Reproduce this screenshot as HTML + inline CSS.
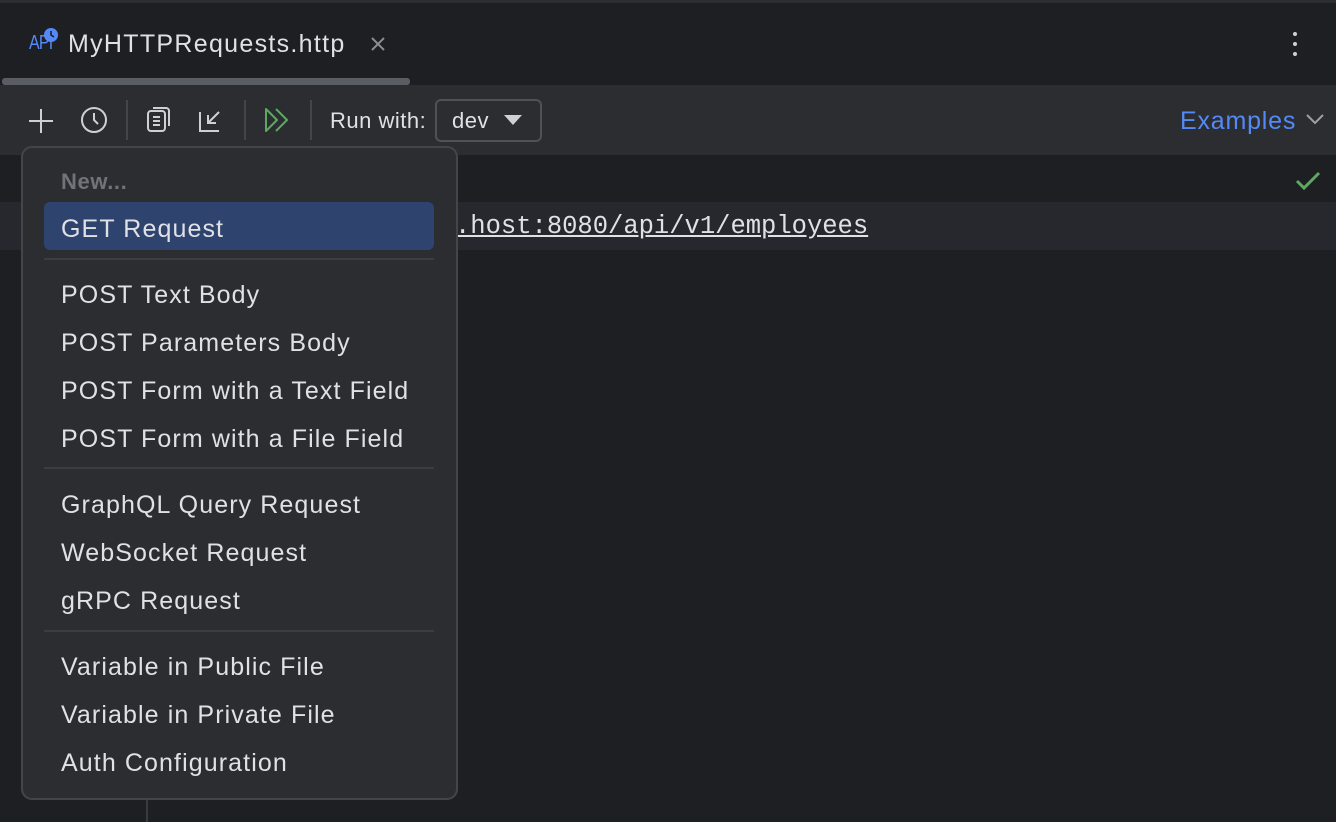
<!DOCTYPE html>
<html><head><style>
*{margin:0;padding:0;box-sizing:border-box}
body{width:1336px;height:822px;background:#1e1f22;font-family:"Liberation Sans",sans-serif;position:relative;overflow:hidden;color:#dfe1e5}
.abs{position:absolute}
.tb{left:0;top:85px;width:1336px;height:70px;background:#2b2d30}
.item{position:absolute;left:61px;font-size:25px;letter-spacing:1.1px;color:#dfe1e5;line-height:48px;height:48px;white-space:nowrap}
.sep{position:absolute;left:44px;width:390px;height:2px;background:#3b3d42}
.vs{position:absolute;top:100px;width:2px;height:40px;background:#43454a}
</style></head><body>
<div class="abs" style="left:0;top:0;width:1336px;height:3px;background:#2b2d30"></div>
<!-- tab -->
<div class="abs" style="left:29px;top:32px;font-size:20px;color:#548af7;letter-spacing:-1px;transform:scaleX(0.8);transform-origin:left">API</div>
<svg class="abs" style="left:43px;top:27px" width="16" height="16"><circle cx="8" cy="8" r="7" fill="#548af7"/><path d="M8 4v4l3 2" stroke="#1e1f22" stroke-width="1.6" fill="none"/></svg>
<div class="abs" style="left:68px;top:30px;font-size:25px;letter-spacing:1.3px;color:#dfe1e5">MyHTTPRequests.http</div>
<svg class="abs" style="left:370px;top:36px" width="16" height="16"><path d="M2 2l12 12M14 2L2 14" stroke="#8c8e94" stroke-width="2"/></svg>
<div class="abs" style="left:1293px;top:32px;width:4px;height:4px;border-radius:50%;background:#ced0d6;box-shadow:0 10px 0 #ced0d6,0 20px 0 #ced0d6"></div>
<div class="abs" style="left:2px;top:78px;width:408px;height:7px;border-radius:3px;background:#5a5d63"></div>
<!-- toolbar -->
<div class="abs tb"></div>
<svg class="abs" style="left:26px;top:106px" width="30" height="30"><path d="M15 3v24M3 15h24" stroke="#ced0d6" stroke-width="2"/></svg>
<svg class="abs" style="left:78px;top:104px" width="32" height="32"><circle cx="16" cy="16" r="12" fill="none" stroke="#ced0d6" stroke-width="2"/><path d="M16 9v7l4 4" fill="none" stroke="#ced0d6" stroke-width="2"/></svg>
<div class="vs" style="left:126px"></div>
<svg class="abs" style="left:144px;top:104px" width="30" height="30"><rect x="4" y="7" width="17" height="20" rx="3" fill="none" stroke="#ced0d6" stroke-width="2"/><path d="M9 4h13a3 3 0 0 1 3 3v15M9 13h7M9 17h7M9 21h7" fill="none" stroke="#ced0d6" stroke-width="2"/></svg>
<svg class="abs" style="left:196px;top:104px" width="30" height="30"><path d="M4 8v19h19M12 19l11-11M12 11v8h8" fill="none" stroke="#ced0d6" stroke-width="2"/></svg>
<div class="vs" style="left:244px"></div>
<svg class="abs" style="left:262px;top:104px" width="32" height="32"><path d="M4 5l11 11L4 27zM14 5l11 11-11 11" fill="none" stroke="#5fa861" stroke-width="2" stroke-linejoin="round"/></svg>
<div class="vs" style="left:310px"></div>
<div class="abs" style="left:330px;top:108px;font-size:22px;letter-spacing:0.5px;color:#dfe1e5">Run with:</div>
<div class="abs" style="left:435px;top:99px;width:107px;height:43px;border:2px solid #4e5157;border-radius:6px"></div>
<div class="abs" style="left:452px;top:108px;font-size:22px;letter-spacing:0.5px;color:#dfe1e5">dev</div>
<svg class="abs" style="left:503px;top:114px" width="20" height="12"><path d="M1 1h18l-9 10z" fill="#ced0d6"/></svg>
<div class="abs" style="left:1180px;top:107px;font-size:25px;letter-spacing:0.8px;color:#548af7">Examples</div>
<svg class="abs" style="left:1305px;top:112px" width="20" height="14"><path d="M2 3l8 8 8-8" fill="none" stroke="#9da0a8" stroke-width="2"/></svg>
<!-- editor -->
<div class="abs" style="left:0;top:202px;width:1336px;height:48px;background:#26282e"></div>
<svg class="abs" style="left:1294px;top:170px" width="28" height="22"><path d="M3 11l7 7L25 3" fill="none" stroke="#5fa861" stroke-width="3"/></svg>
<div class="abs" style="left:455px;top:212px;font-family:'Liberation Mono',monospace;font-size:25.5px;color:#dfe1e5;text-decoration:underline">.host:8080/api/v1/employees</div>
<div class="abs" style="left:146px;top:790px;width:2px;height:32px;background:#393b40"></div>
<!-- popup -->
<div class="abs" style="left:21px;top:146px;width:437px;height:654px;background:#2b2d30;border:2px solid #43454a;border-radius:11px"></div>
<div class="abs" style="left:61px;top:169px;font-size:22px;letter-spacing:0.6px;font-weight:bold;color:#6f737a">New...</div>
<div class="abs" style="left:44px;top:202px;width:390px;height:48px;background:#2e436e;border-radius:6px"></div>
<div class="item" style="top:205px">GET Request</div>
<div class="sep" style="top:258px"></div>
<div class="item" style="top:271px">POST Text Body</div>
<div class="item" style="top:319px">POST Parameters Body</div>
<div class="item" style="top:367px">POST Form with a Text Field</div>
<div class="item" style="top:415px">POST Form with a File Field</div>
<div class="sep" style="top:467px"></div>
<div class="item" style="top:481px">GraphQL Query Request</div>
<div class="item" style="top:529px">WebSocket Request</div>
<div class="item" style="top:577px">gRPC Request</div>
<div class="sep" style="top:630px"></div>
<div class="item" style="top:643px">Variable in Public File</div>
<div class="item" style="top:691px">Variable in Private File</div>
<div class="item" style="top:739px">Auth Configuration</div>
</body></html>
